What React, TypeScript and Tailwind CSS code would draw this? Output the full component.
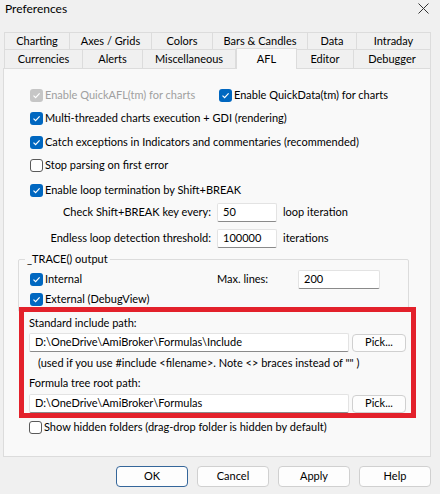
import React from "react";

const Check = ({ checked, disabled }: { checked: boolean; disabled?: boolean }) => {
  if (!checked) {
    return <span className="w-[13px] h-[13px] shrink-0 rounded-[3px] border border-[#5a5a5a] bg-white" />;
  }
  return (
    <span
      className={
        "w-[13px] h-[13px] shrink-0 rounded-[3px] flex items-center justify-center " +
        (disabled ? "bg-[#c6c6c6]" : "bg-[#0067c0]")
      }
    >
      <svg width="9" height="9" viewBox="0 0 9 9">
        <polyline points="1.5,4.6 3.6,6.6 7.6,2.4" fill="none" stroke="white" strokeWidth="1.2" />
      </svg>
    </span>
  );
};

const CheckRow = ({
  label,
  checked,
  disabled,
  className = "",
}: {
  label: string;
  checked: boolean;
  disabled?: boolean;
  className?: string;
}) => (
  <div className={"flex items-center h-[16px] gap-[2px] " + className}>
    <Check checked={checked} disabled={disabled} />
    <span className={"whitespace-nowrap " + (disabled ? "text-[#a0a0a0]" : "text-black")}>{label}</span>
  </div>
);

const Edit = ({ value, className = "" }: { value: string; className?: string }) => (
  <div
    className={
      "h-[19px] bg-white border border-[#e3e3e3] border-b-[#8a8a8a] rounded-[2px] flex items-center pl-[5px] whitespace-nowrap " +
      className
    }
  >
    {value}
  </div>
);

const Btn = ({ label, def, className = "" }: { label: string; def?: boolean; className?: string }) => (
  <div
    className={
      "flex items-center justify-center bg-[#fdfdfd] rounded-[4px] border " +
      (def ? "border-[#35669a] " : "border-[#d0d0d0] ") +
      className
    }
  >
    {label}
  </div>
);

const row1 = [
  { t: "Charting", w: "w-[66px] border-l" },
  { t: "Axes / Grids", w: "w-[82px]" },
  { t: "Colors", w: "w-[61px]" },
  { t: "Bars & Candles", w: "w-[95px]" },
  { t: "Data", w: "w-[49px]" },
  { t: "Intraday", w: "w-[74px]" },
];

const row2 = [
  { t: "Currencies", w: "w-[79px] border-l" },
  { t: "Alerts", w: "w-[60px]" },
  { t: "Miscellaneous", w: "w-[93px]" },
  { t: "AFL", w: "w-[61px]" },
  { t: "Editor", w: "w-[57px]" },
  { t: "Debugger", w: "w-[77px]" },
];

export default function App() {
  return (
    <div className="w-[440px] h-[494px] bg-[#f0f0f0] text-[11px] text-black relative overflow-hidden font-['Lato','Roboto',sans-serif]">
      {/* title bar */}
      <div className="h-[17px] flex items-center justify-between pl-[5px] pr-[11px]">
        <span className="text-[12px]">Preferences</span>
        <svg width="11" height="11" viewBox="0 0 11 11">
          <path d="M0.5 0.5 L10.5 10.5 M10.5 0.5 L0.5 10.5" stroke="#333" strokeWidth="1" />
        </svg>
      </div>

      {/* tabs */}
      <div className="mt-[15px] ml-[4px] w-[427px]">
        <div className="flex h-[17px]">
          {row1.map((tab) => (
            <div
              key={tab.t}
              className={"flex items-center justify-center border-t border-r border-[#dcdcdc] bg-[#f0f0f0] " + tab.w}
            >
              {tab.t}
            </div>
          ))}
        </div>
        <div className="flex h-[19px] items-end">
          {row2.map((tab) =>
            tab.t === "AFL" ? (
              <div
                key={tab.t}
                className={
                  "h-[21px] -mb-[1px] relative z-10 flex items-start justify-center pt-[2px] bg-[#f9f9f9] border-t border-x border-[#dcdcdc] " +
                  tab.w
                }
              >
                {tab.t}
              </div>
            ) : (
              <div
                key={tab.t}
                className={
                  "h-[19px] flex items-center justify-center border-t border-r border-[#dcdcdc] bg-[#f0f0f0] " + tab.w
                }
              >
                {tab.t}
              </div>
            )
          )}
        </div>
      </div>

      {/* page */}
      <div className="ml-[3px] w-[428px] h-[389px] border border-[#dcdcdc] bg-[#f9f9f9] relative pl-[14px] pt-[18px]">
        <div className="flex items-center h-[16px] pl-[12px]">
          <CheckRow label="Enable QuickAFL(tm) for charts" checked disabled className="w-[189px]" />
          <CheckRow label="Enable QuickData(tm) for charts" checked />
        </div>
        <CheckRow label="Multi-threaded charts execution + GDI (rendering)" checked className="mt-[7px] pl-[12px]" />
        <CheckRow label="Catch exceptions in Indicators and commentaries (recommended)" checked className="mt-[8px] pl-[12px]" />
        <CheckRow label="Stop parsing on first error" checked={false} className="mt-[7px] pl-[12px]" />
        <CheckRow label="Enable loop termination by Shift+BREAK" checked className="mt-[9px] pl-[12px]" />

        <div className="flex items-center mt-[5px] h-[19px]">
          <span className="w-[193px] text-right whitespace-nowrap">Check Shift+BREAK key every:</span>
          <Edit value="50" className="ml-[6px] w-[60px]" />
          <span className="ml-[6px]">loop iteration</span>
        </div>
        <div className="flex items-center mt-[7px] h-[19px]">
          <span className="w-[193px] text-right whitespace-nowrap">Endless loop detection threshold:</span>
          <Edit value="100000" className="ml-[6px] w-[60px]" />
          <span className="ml-[6px]">iterations</span>
        </div>

        {/* trace group */}
        <div className="relative mt-[11px] w-[391px] h-[53px] border border-[#dcdcdc] rounded-[2px] pl-[11px] pt-[10px]">
          <span className="absolute -top-[9px] left-[6px] px-[2px] bg-[#f9f9f9] leading-[16px]">_TRACE() output</span>
          <div className="flex items-center h-[19px]">
            <CheckRow label="Internal" checked className="w-[187px]" />
            <span className="w-[81px]">Max. lines:</span>
            <Edit value="200" className="w-[82px]" />
          </div>
          <CheckRow label="External (DebugView)" checked className="mt-[2px]" />
        </div>

        {/* paths */}
        <div className="pl-[11px]">
          <div className="h-[16px] flex items-center mt-[3px]">Standard include path:</div>
          <div className="flex items-center mt-[2px] h-[19px]">
            <Edit value="D:\OneDrive\AmiBroker\Formulas\Include" className="w-[320px]" />
            <Btn label="Pick..." className="ml-[3px] w-[54px] h-[18px]" />
          </div>
          <div className="h-[16px] flex items-center mt-[3px] pl-[9px] whitespace-nowrap">
            (used if you use #include &lt;filename&gt;. Note &lt;&gt; braces instead of "" )
          </div>
          <div className="h-[16px] flex items-center mt-[4px]">Formula tree root path:</div>
          <div className="flex items-center mt-[3px] h-[19px]">
            <Edit value="D:\OneDrive\AmiBroker\Formulas" className="w-[320px]" />
            <Btn label="Pick..." className="ml-[3px] w-[54px] h-[18px]" />
          </div>
          <CheckRow label="Show hidden folders (drag-drop folder is hidden by default)" checked={false} className="mt-[6px]" />
        </div>

        {/* highlight annotation */}
        <div className="absolute left-[15px] top-[238px] w-[397px] h-[111px] border-[5px] border-[#e3212b] pointer-events-none" />
      </div>

      {/* buttons */}
      <div className="flex justify-end gap-[9px] pr-[9px] mt-[9px]">
        <Btn label="OK" def className="w-[72px] h-[21px]" />
        <Btn label="Cancel" className="w-[72px] h-[21px]" />
        <Btn label="Apply" className="w-[72px] h-[21px]" />
        <Btn label="Help" className="w-[72px] h-[21px]" />
      </div>
    </div>
  );
}
